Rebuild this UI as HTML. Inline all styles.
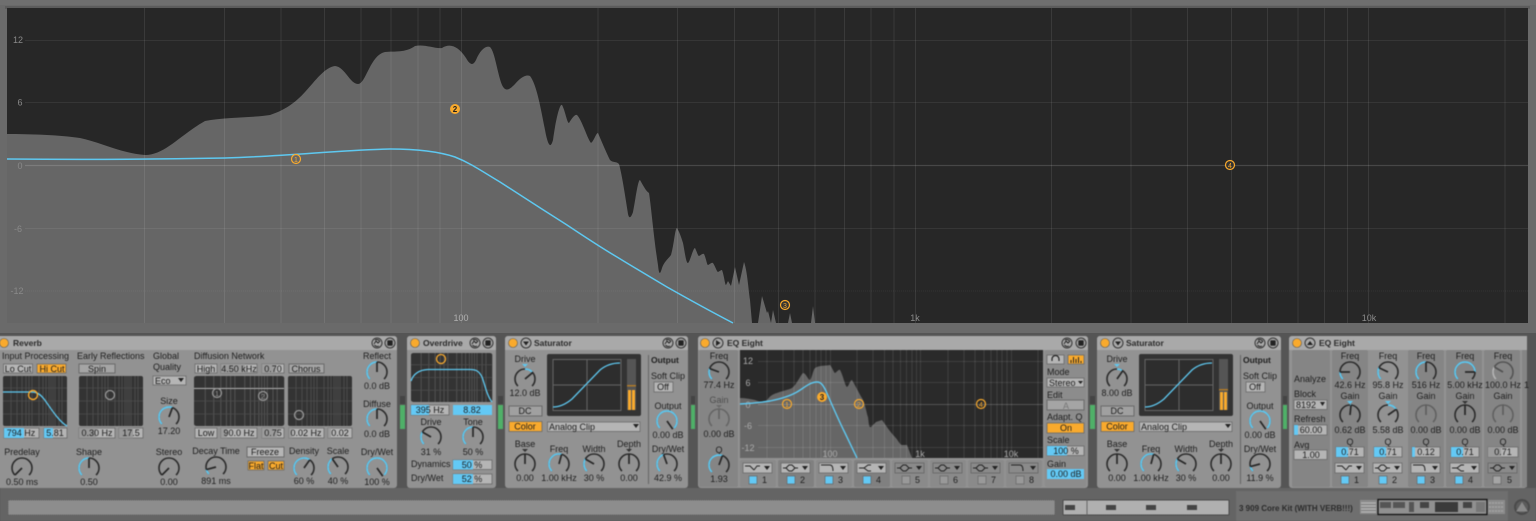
<!DOCTYPE html>
<html><head><meta charset="utf-8"><style>
html,body{margin:0;padding:0;background:#646464;width:1536px;height:521px;overflow:hidden}
svg{display:block;position:absolute;left:0;top:0;font-family:"Liberation Sans",sans-serif}
text{font-size:9px;fill:#1e1e1e;letter-spacing:0}
.c{text-anchor:middle}
.t{font-weight:bold;font-size:8.5px;fill:#2a2a2a}
.g{fill:#8a8a8a;font-size:9px;letter-spacing:0}
.b{fill:none;stroke:#5ec8f0;stroke-width:1.7}
.n{stroke:#262626;stroke-width:1.7}
.box{fill:#b5b5b5;stroke:#6a6a6a;stroke-width:.8}
.bl{fill:#63c9f5}
.or{fill:#f9aa2d;stroke:#6a6a6a;stroke-width:.8}
.tab{fill:#858585}
.pan{fill:#929292}
.ti{fill:#a9a9a9}
.dk{fill:#333}
.act{fill:#f9aa2d;stroke:#555;stroke-width:.6}
.ico{fill:#a9a9a9;stroke:#333;stroke-width:1}
#low{filter:blur(.5px)}
</style></head><body>
<svg width="1536" height="521" viewBox="0 0 1536 521" xmlns="http://www.w3.org/2000/svg">
<defs>
<circle id="k" r="10" pathLength="360" stroke-dasharray="270 999" transform="rotate(135)" fill="none" stroke="#2b2b2b" stroke-width="1.6"/>
<g id="r"><circle r="5" class="ico"/><path d="M-3 1l2-3 2 2 2-2" fill="none" stroke="#222" stroke-width="1"/><path d="M-2-3a3.300 3.300 0 0 1 4.500 1M2 3a3.300 3.300 0 0 1-4.500-1" fill="none" stroke="#222" stroke-width="1"/></g>
<g id="s"><circle r="5" class="ico"/><rect x="-2.700" y="-2.700" width="5.400" height="5.400" rx=".8" fill="#222"/></g>
<g id="mg"><rect width="64" height="50" rx="2" fill="#333"/><path d="M8 0v50M14 0v50M19 0v50M23 0v50M26 0v50M29 0v50M36 0v50M40 0v50M43 0v50M46 0v50M48 0v50M50 0v50M52 0v50M56 0v50M59 0v50" stroke="#555" stroke-width=".7"/><path d="M0 12h64M0 25h64M0 38h64" stroke="#4d4d4d" stroke-width=".7"/></g>
<g id="dn"><circle r="5" class="ico"/><path d="M-3-1.500h6l-3 4z" fill="#222"/></g>
<g id="fs1"><rect x="-15" y="-5" width="29" height="10" class="box"/><path d="M-13-2h5l4 4M-4 2l3-4h3" fill="none" stroke="#222"/><path d="M6-2h6l-3 4z" fill="#222"/></g>
<g id="fs2"><rect x="-15" y="-5" width="29" height="10" class="box"/><path d="M-13 0h3l3-3h3l3 3h3M-10 0l3 3h3l3-3" fill="none" stroke="#222"/><path d="M6-2h6l-3 4z" fill="#222"/></g>
<g id="fs3"><rect x="-15" y="-5" width="29" height="10" class="box"/><path d="M-13-3h9q3 0 3 6" fill="none" stroke="#222"/><path d="M6-2h6l-3 4z" fill="#222"/></g>
<g id="fs4"><rect x="-15" y="-5" width="29" height="10" class="box"/><path d="M-13 0h5l4-3h3M-8 0l4 3h3" fill="none" stroke="#222"/><path d="M6-2h6l-3 4z" fill="#222"/></g>
<g id="fd2"><rect x="-15" y="-5" width="29" height="10" fill="#8a8a8a" stroke="#666" stroke-width=".8"/><path d="M-13 0h3l3-3h3l3 3h3M-10 0l3 3h3l3-3" fill="none" stroke="#222"/><path d="M6-2h6l-3 4z" fill="#222"/></g>
<g id="fd3"><rect x="-15" y="-5" width="29" height="10" fill="#8a8a8a" stroke="#666" stroke-width=".8"/><path d="M-13-3h9q3 0 3 6" fill="none" stroke="#222"/><path d="M6-2h6l-3 4z" fill="#222"/></g>
</defs>

<!-- main analyzer -->
<rect x="0" y="0" width="1536" height="5" fill="#6f6f6f"/>
<rect x="0" y="5" width="1536" height="331" fill="#6a6a6a"/>
<rect x="5" y="6" width="1525" height="3" fill="#5c5c5c"/>
<rect x="7" y="8" width="1521" height="315" fill="#272727"/>
<path fill="#666" d="M7 134C30 134 60 135 80 138C100 142 120 153 145 155C165 155 180 135 205 121C225 117 250 118 270 115C285 110 295 103 305 92C315 81 325 67 335 66C345 67 350 84 358 84C366 84 370 55 385 52C395 51 405 53 415 46C425 44 435 49 442 48C450 43 458 46 466 58C470 65 473 66 476 60C480 50 486 45 490 47C495 52 497 72 502 85C506 93 510 89 515 84C520 78 526 74 530 76C537 85 541 110 546 135C549 148 551 147 553 140C556 118 560 103 562 105C565 110 567 123 569 123C572 118 575 114 577 115C582 120 587 138 591 143C594 141 596 133 598 133C601 140 606 152 610 160C613 163 616 161 619 164C622 175 625 195 628 214C629 219 631 218 633 212C636 196 638 180 640 180C644 187 646 191 649 193C651 205 654 240 658 265C659 275 660 275 662 268C664 262 668 259 671 255C674 245 675 228 677 228C680 233 682 240 683 243C685 253 686 263 688 263C690 262 693 248 695 248C697 252 698 256 699 256C701 255 703 253 704 254C706 258 707 265 708 265C710 264 712 262 713 263C715 266 717 272 718 272C720 271 721 270 722 270C724 275 725 285 726 285L728 281L731 286L735 267L739 285L744 262C747 270 748 285 750 300L752 323L758 323L762 296L767 313L768 311L771 323L773 310L776 323L788 323L790 313L792 323L811 323L813 306L815 323L7 323Z"/>
<path fill="none" stroke="#fff" stroke-opacity=".09" d="M144.500 8v315M224.500 8v315M281 8v315M324.500 8v315M361 8v315M391 8v315M418 8v315M440 8v315M461.500 8v315M598 8v315M677.500 8v315M734.500 8v315M778.500 8v315M815 8v315M844.500 8v315M871 8v315M894 8v315M915.500 8v315M1051.500 8v315M1131 8v315M1187.500 8v315M1231.500 8v315M1267.500 8v315M1298 8v315M1324.500 8v315M1347.500 8v315M1368.500 8v315M1505 8v315"/>
<path fill="none" stroke="#fff" stroke-opacity=".07" d="M25 40.500H1528M25 102.500H1528M25 228.500H1528"/>
<path fill="none" stroke="#fff" stroke-opacity=".06" stroke-dasharray="1 1" d="M25 291H1528"/>
<path fill="none" stroke="#fff" stroke-opacity=".15" stroke-width="1.300" d="M25 165.500H1528"/>
<path fill="none" stroke="#5ec8f0" stroke-width="1.500" d="M7 159C60 159.500 145 159.500 225 158C290 156 340 150 390 149C420 149 440 152 455 157C470 163 480 170 500 182C520 195 545 211 567 225C585 237 600 247 617 257C635 268 650 277 667 287C690 300 710 311 733 323"/>
<text class="g c" x="18" y="43">12</text><text class="g c" x="20" y="105.500">6</text><text class="g c" x="20" y="169">0</text><text class="g c" x="18" y="232">-6</text><text class="g c" x="17" y="294">-12</text>
<text class="g c" x="461" y="321" style="fill:#b0b0b0">100</text><text class="g c" x="915" y="321">1k</text><text class="g c" x="1369" y="321">10k</text>
<circle cx="296" cy="159" r="4.500" fill="none" stroke="#f9aa2d" stroke-width="1.200"/><text class="c" x="296" y="162" style="font-size:7px;fill:#f9aa2d">1</text>
<circle cx="455" cy="109" r="5" fill="#f9aa2d"/><text class="c" x="455" y="112" style="font-size:8px;font-weight:bold">2</text>
<circle cx="785" cy="305" r="4.500" fill="#333" stroke="#f9aa2d" stroke-width="1.200"/><text class="c" x="785" y="308" style="font-size:7px;fill:#f9aa2d">3</text>
<circle cx="1230" cy="165" r="4.500" fill="#333" stroke="#f9aa2d" stroke-width="1.200"/><text class="c" x="1230" y="168" style="font-size:7px;fill:#f9aa2d">4</text>
<rect x="0" y="333" width="1536" height="188" fill="#555"/>

<g id="low">
<!-- bottom -->
<rect x="0" y="488" width="1536" height="33" fill="#646464"/>
<rect x="8" y="500" width="1047" height="15" rx="1" fill="#8d8d8d" stroke="#5a5a5a" stroke-dasharray="1 1"/>
<rect x="1063" y="500" width="166" height="15" rx="1" fill="#b0b0b0" stroke="#4a4a4a"/>
<path d="M1087 500v15" stroke="#666"/>
<rect x="1065" y="505" width="10" height="5" fill="#444"/><rect x="1106" y="505" width="10" height="5" fill="#444"/><rect x="1146" y="505" width="10" height="5" fill="#444"/><rect x="1187" y="505" width="10" height="5" fill="#444"/>
<rect x="1236" y="491" width="272" height="30" fill="#6f6f6f"/>
<text class="t" x="1239" y="511" style="font-size:8px">3 909 Core Kit (WITH VERB!!!)</text>
<rect x="1360" y="500" width="17" height="14" fill="#8c8c8c"/><path d="M1361 503h15M1361 506h15M1361 509h15M1361 512h15" stroke="#bbb"/>
<rect x="1487" y="500" width="18" height="14" fill="#8c8c8c"/><path d="M1489 503h14M1489 507h14M1489 511h14" stroke="#aaa" stroke-dasharray="2 1"/>
<rect x="1378" y="499.500" width="109" height="15" fill="#909090" stroke="#111" stroke-width="1.300"/>
<rect x="1380" y="502" width="11" height="6" fill="#555"/><rect x="1393" y="502" width="12" height="6" fill="#555"/><rect x="1409" y="502" width="5" height="10" fill="#555"/><rect x="1420" y="502" width="9" height="6" fill="#444"/><rect x="1435" y="502" width="23" height="10" fill="#3a3a3a"/><rect x="1463" y="502" width="9" height="6" fill="#444"/><rect x="1476" y="502" width="9" height="10" fill="#777"/>
<circle cx="1522" cy="507" r="7" fill="#5c5c5c" stroke="#4a4a4a" stroke-width="2"/><path d="M1517 511l5-8 5 8z" fill="#8a8a8a" stroke="#8a8a8a"/>

<!-- meters -->
<g fill="#4fb068"><rect x="400" y="405" width="5" height="24"/><rect x="498" y="405" width="5" height="24"/><rect x="691" y="405" width="4" height="24"/><rect x="1090" y="405" width="5" height="24"/><rect x="1283" y="405" width="4" height="24"/></g>
<g fill="#444"><rect x="400" y="396" width="5" height="8"/><rect x="498" y="396" width="5" height="8"/><rect x="691" y="396" width="4" height="8"/><rect x="1090" y="396" width="5" height="8"/><rect x="1283" y="396" width="4" height="8"/></g>

<!-- REVERB -->
<rect x="-4" y="336" width="401" height="152" rx="3" class="pan"/>
<path d="M-4 350v-11a3 3 0 0 1 3-3h395a3 3 0 0 1 3 3v11z" class="ti"/>
<circle cx="4" cy="343" r="4.500" class="act"/>
<text class="t" x="13" y="346">Reverb</text>
<use href="#r" x="377" y="343"/><use href="#s" x="390" y="343"/>
<text x="2" y="359">Input Processing</text><text x="77" y="359">Early Reflections</text><text x="153" y="359">Global</text><text x="194" y="359">Diffusion Network</text><text class="c" x="377" y="359">Reflect</text>
<text x="153" y="370">Quality</text>
<rect x="3.500" y="364" width="29" height="9" class="box"/><text class="c" x="18" y="372">Lo Cut</text>
<rect x="37" y="364" width="29" height="9" class="or"/><text class="c" x="52" y="372">Hi Cut</text>
<rect x="79" y="364" width="36" height="9" fill="#a5a5a5" stroke="#6a6a6a"/><text class="c" x="97" y="372">Spin</text>
<use href="#mg" x="3" y="376"/><use href="#mg" x="79" y="376"/>
<g transform="translate(194 376) scale(1.410 1)"><use href="#mg"/></g><use href="#mg" x="288" y="376"/>
<path d="M3 392h28c6 0 9 2 13 7s14 22 23 27" fill="none" stroke="#5ec8f0" stroke-width="1.300"/>
<circle cx="33" cy="395" r="4.500" fill="none" stroke="#f9aa2d" stroke-width="1.400"/>
<circle cx="110" cy="395" r="4.500" fill="none" stroke="#999" stroke-width="1.300"/>
<path d="M194 388.500h90" stroke="#aaa"/>
<circle cx="217" cy="393" r="4.500" fill="none" stroke="#999" stroke-width="1.200"/><text class="c" x="217" y="396" style="font-size:7px;fill:#999">1</text>
<circle cx="263" cy="396" r="4.500" fill="none" stroke="#999" stroke-width="1.200"/><text class="c" x="263" y="399" style="font-size:7px;fill:#999">2</text>
<circle cx="299" cy="415" r="4.500" fill="none" stroke="#999" stroke-width="1.300"/>
<rect x="4" y="428" width="35" height="10" class="box"/><rect x="4" y="428" width="20" height="10" class="bl"/><text class="c" x="21" y="436">794 Hz</text>
<rect x="44" y="428" width="23" height="10" class="box"/><rect x="44" y="428" width="9" height="10" class="bl"/><text class="c" x="55" y="436">5.81</text>
<rect x="79" y="428" width="36" height="10" class="box"/><rect x="79" y="428" width="17" height="10" fill="#999"/><text class="c" x="97" y="436">0.30 Hz</text>
<rect x="119" y="428" width="24" height="10" class="box"/><rect x="119" y="428" width="14" height="10" fill="#999"/><text class="c" x="131" y="436">17.5</text>
<rect x="153" y="376" width="33" height="9" class="box"/><text x="155" y="384">Eco</text><path d="M178 378h6l-3 4z" fill="#222"/>
<text class="c" x="169" y="404">Size</text><text class="c" x="169" y="434">17.20</text>
<rect x="195" y="364" width="22" height="9" class="box"/><text class="c" x="206" y="372">High</text>
<rect x="221" y="364" width="36" height="9" class="box"/><rect x="221" y="364" width="24" height="9" fill="#9c9c9c"/><text class="c" x="239" y="372">4.50 kHz</text>
<rect x="262" y="364" width="22" height="9" class="box"/><rect x="262" y="364" width="14" height="9" fill="#9c9c9c"/><text class="c" x="273" y="372">0.70</text>
<rect x="289" y="364" width="35" height="9" fill="#a5a5a5" stroke="#6a6a6a"/><text class="c" x="306" y="372">Chorus</text>
<rect x="195" y="428" width="22" height="10" class="box"/><text class="c" x="206" y="436">Low</text>
<rect x="221" y="428" width="36" height="10" class="box"/><rect x="221" y="428" width="6" height="10" fill="#9c9c9c"/><text class="c" x="239" y="436">90.0 Hz</text>
<rect x="262" y="428" width="22" height="10" class="box"/><rect x="262" y="428" width="15" height="10" fill="#9c9c9c"/><text class="c" x="273" y="436">0.75</text>
<rect x="289" y="428" width="35" height="10" class="box"/><rect x="289" y="428" width="3" height="10" fill="#9c9c9c"/><text class="c" x="306" y="436">0.02 Hz</text>
<rect x="328" y="428" width="24" height="10" class="box"/><rect x="328" y="428" width="3" height="10" fill="#9c9c9c"/><text class="c" x="340" y="436">0.02</text>
<text class="c" x="377" y="389">0.0 dB</text><text class="c" x="377" y="407">Diffuse</text><text class="c" x="377" y="437">0.0 dB</text>
<text class="c" x="22" y="455">Predelay</text><text class="c" x="89" y="455">Shape</text><text class="c" x="169" y="455">Stereo</text><text class="c" x="216" y="454">Decay Time</text><text class="c" x="304" y="454">Density</text><text class="c" x="338" y="454">Scale</text><text class="c" x="377" y="455">Dry/Wet</text>
<text class="c" x="22" y="485">0.50 ms</text><text class="c" x="89" y="485">0.50</text><text class="c" x="169" y="485">0.00</text><text class="c" x="216" y="484">891 ms</text><text class="c" x="304" y="484">60 %</text><text class="c" x="338" y="484">40 %</text><text class="c" x="377" y="485">100 %</text>
<rect x="247" y="447" width="37" height="10" fill="#b5b5b5" stroke="#6a6a6a"/><text class="c" x="265" y="455">Freeze</text>
<rect x="248" y="461" width="16" height="9" class="or"/><text class="c" x="256" y="469">Flat</text><rect x="268" y="461" width="16" height="9" class="or"/><text class="c" x="276" y="469">Cut</text>
<g transform="translate(377 372)"><use href="#k"/><circle class="b" r="10" pathLength="360" stroke-dasharray="135 999" transform="rotate(135)"/><line class="n" y2="-10"/></g>
<g transform="translate(377 419)"><use href="#k"/><circle class="b" r="10" pathLength="360" stroke-dasharray="135 999" transform="rotate(135)"/><line class="n" y2="-10"/></g>
<g transform="translate(169 417)"><use href="#k"/><circle class="b" r="10" pathLength="360" stroke-dasharray="155 999" transform="rotate(135)"/><line class="n" y2="-10" transform="rotate(20)"/></g>
<g transform="translate(22 468)"><use href="#k"/><line class="n" y2="-10" transform="rotate(-135)"/></g>
<g transform="translate(89 468)"><use href="#k"/><circle class="b" r="10" pathLength="360" stroke-dasharray="135 999" transform="rotate(135)"/><line class="n" y2="-10"/></g>
<g transform="translate(169 468)"><use href="#k"/><line class="n" y2="-10" transform="rotate(-135)"/></g>
<g transform="translate(216 467)"><use href="#k"/><circle class="b" r="10" pathLength="360" stroke-dasharray="30 999" transform="rotate(135)"/><line class="n" y2="-10" transform="rotate(-105)"/></g>
<g transform="translate(304 468)"><use href="#k"/><circle class="b" r="10" pathLength="360" stroke-dasharray="170 999" transform="rotate(135)"/><line class="n" y2="-10" transform="rotate(35)"/></g>
<g transform="translate(338 467)"><use href="#k"/><circle class="b" r="10" pathLength="360" stroke-dasharray="100 999" transform="rotate(135)"/><line class="n" y2="-10" transform="rotate(-35)"/></g>
<g transform="translate(377 468)"><use href="#k"/><circle class="b" r="10" pathLength="360" stroke-dasharray="270 999" transform="rotate(135)"/><line class="n" y2="-10" transform="rotate(145)"/></g>

<!-- OVERDRIVE -->
<rect x="407" y="336" width="89" height="152" rx="3" class="pan"/>
<path d="M407 350v-11a3 3 0 0 1 3-3h83a3 3 0 0 1 3 3v11z" class="ti"/>
<circle cx="415" cy="343" r="4.500" class="act"/><text class="t" x="423" y="346">Overdrive</text>
<use href="#r" x="475" y="343"/><use href="#s" x="488" y="343"/>
<g transform="translate(411 353) scale(1.270 .980)"><use href="#mg"/></g>
<path d="M411 381C413 375 418 370 428 369.500H470C476 369.500 479 371 482 377C485 385 487 396 492 402" fill="none" stroke="#5ec8f0" stroke-width="1.300"/>
<circle cx="441" cy="359" r="4.500" fill="none" stroke="#f9aa2d" stroke-width="1.300"/>
<rect x="411" y="405" width="38" height="10" class="box"/><rect x="411" y="405" width="18" height="10" class="bl"/><text class="c" x="430" y="413">395 Hz</text>
<rect x="453" y="405" width="39" height="10" class="bl"/><text class="c" x="472" y="413">8.82</text>
<text class="c" x="431" y="425">Drive</text><text class="c" x="473" y="425">Tone</text>
<text class="c" x="431" y="455">31 %</text><text class="c" x="473" y="455">50 %</text>
<g transform="translate(431 437)"><use href="#k"/><circle class="b" r="10" pathLength="360" stroke-dasharray="75 999" transform="rotate(135)"/><line class="n" y2="-10" transform="rotate(-60)"/></g>
<g transform="translate(473 437)"><use href="#k"/><circle class="b" r="10" pathLength="360" stroke-dasharray="135 999" transform="rotate(135)"/><line class="n" y2="-10"/></g>
<text x="411" y="467">Dynamics</text><rect x="453" y="460" width="39" height="9.500" class="box"/><rect x="453" y="460" width="20" height="9.500" class="bl"/><text class="c" x="472" y="468">50 %</text>
<text x="411" y="481">Dry/Wet</text><rect x="453" y="474" width="39" height="10" class="box"/><rect x="453" y="474" width="20" height="10" class="bl"/><text class="c" x="472" y="482">52 %</text>

<!-- SATURATOR 1 -->
<rect x="505" y="336" width="183" height="152" rx="3" class="pan"/>
<path d="M505 350v-11a3 3 0 0 1 3-3h177a3 3 0 0 1 3 3v11z" class="ti"/>
<circle cx="513" cy="343" r="4.500" class="act"/><use href="#dn" x="526" y="343"/><text class="t" x="534" y="346">Saturator</text>
<use href="#r" x="668" y="343"/><use href="#s" x="681" y="343"/>
<text class="c" x="525" y="362">Drive</text><path d="M522 364h6l-3 3z" fill="#5ec8f0"/>
<g transform="translate(525 379)"><use href="#k"/><circle class="b" r="10" pathLength="360" stroke-dasharray="45 999" transform="rotate(-90)"/><line class="n" y2="-10" transform="rotate(50)"/></g>
<text class="c" x="525" y="396">12.0 dB</text>
<rect x="509" y="406" width="33" height="10" fill="#a0a0a0" stroke="#6a6a6a"/><text class="c" x="525" y="414">DC</text>
<rect x="509" y="421.500" width="33" height="10" class="or"/><text class="c" x="525" y="429.500">Color</text>
<rect x="547" y="354" width="94" height="62" rx="2" class="dk"/>
<rect x="553" y="359.500" width="68" height="51" fill="#2d2d2d" stroke="#666"/><path d="M587 359v51M553 385h68" stroke="#666"/>
<path d="M553 407C560 407 566 404 572 399L600 370C606 365 612 363 620 363" fill="none" stroke="#5ec8f0" stroke-width="1.300"/>
<rect x="627" y="359" width="9" height="51" fill="#555"/><rect x="628" y="390" width="3" height="20" fill="#f9aa2d"/><rect x="632" y="390" width="3" height="20" fill="#f9aa2d"/><rect x="627" y="385" width="9" height="1.500" fill="#b07a28"/>
<rect x="547.500" y="422" width="92.500" height="9.500" class="box"/><text x="549" y="430">Analog Clip</text><path d="M633 424h6l-3 4z" fill="#222"/>
<path d="M648.500 355v129" stroke="#666"/>
<text x="651" y="363" style="font-weight:bold;font-size:8.500px">Output</text><text class="c" x="668" y="379">Soft Clip</text>
<rect x="654" y="382" width="19" height="10" class="box"/><text class="c" x="663" y="390">Off</text>
<text class="c" x="668" y="409">Output</text><text class="c" x="668" y="438">0.00 dB</text><text class="c" x="668" y="452">Dry/Wet</text><text class="c" x="668" y="481">42.9 %</text>
<g transform="translate(667 421)"><use href="#k"/><circle class="b" r="10" pathLength="360" stroke-dasharray="270 999" transform="rotate(135)"/><line class="n" y2="-10" transform="rotate(145)"/></g>
<g transform="translate(667 464)"><use href="#k"/><circle class="b" r="10" pathLength="360" stroke-dasharray="115 999" transform="rotate(135)"/><line class="n" y2="-10" transform="rotate(-20)"/></g>
<text class="c" x="525" y="447">Base</text><text class="c" x="559" y="452">Freq</text><text class="c" x="594" y="452">Width</text><text class="c" x="629" y="447">Depth</text>
<path d="M522 449h6l-3 3zM626 449h6l-3 3z" fill="#333"/>
<g transform="translate(525 464)"><use href="#k"/><line class="n" y2="-10"/></g>
<g transform="translate(559 464)"><use href="#k"/><circle class="b" r="10" pathLength="360" stroke-dasharray="150 999" transform="rotate(135)"/><line class="n" y2="-10" transform="rotate(15)"/></g>
<g transform="translate(594 464)"><use href="#k"/><circle class="b" r="10" pathLength="360" stroke-dasharray="75 999" transform="rotate(135)"/><line class="n" y2="-10" transform="rotate(-60)"/></g>
<g transform="translate(629 464)"><use href="#k"/><line class="n" y2="-10"/></g>
<text class="c" x="525" y="481">0.00</text><text class="c" x="559" y="481">1.00 kHz</text><text class="c" x="594" y="481">30 %</text><text class="c" x="629" y="481">0.00</text>

<!-- EQ EIGHT 1 -->
<rect x="698" y="336" width="390" height="152" rx="3" class="pan"/>
<path d="M698 350v-11a3 3 0 0 1 3-3h384a3 3 0 0 1 3 3v11z" class="ti"/>
<circle cx="705" cy="343" r="4.500" class="act"/><circle cx="718" cy="343" r="5" class="ico"/><path d="M716 340l4.500 3-4.500 3z" fill="#222"/><text class="t" x="727" y="346">EQ Eight</text>
<use href="#r" x="1067" y="343"/><use href="#s" x="1081" y="343"/>
<rect x="699" y="350" width="39" height="137" rx="2" class="tab"/>
<text class="c" x="719" y="359">Freq</text><text class="c" x="719" y="388">77.4 Hz</text><text class="c" x="719" y="403" opacity=".55">Gain</text><text class="c" x="719" y="437">0.00 dB</text><text class="c" x="719" y="453">Q</text><text class="c" x="719" y="482">1.93</text>
<g transform="translate(719 372)"><use href="#k"/><circle class="b" r="10" pathLength="360" stroke-dasharray="65 999" transform="rotate(135)"/><line class="n" y2="-10" transform="rotate(-70)"/></g>
<g transform="translate(719 419)" opacity=".35"><use href="#k"/><line class="n" y2="-10"/></g>
<path d="M716 405h6l-3 3z" fill="#6a6a6a"/>
<g transform="translate(719 465)"><use href="#k"/><circle class="b" r="10" pathLength="360" stroke-dasharray="155 999" transform="rotate(135)"/><line class="n" y2="-10" transform="rotate(20)"/></g>
<rect x="740" y="350" width="303" height="108" fill="#2a2a2a"/>
<path fill="#666" d="M740 398C745 398 750 399 755 400C760 402 764 403 767 400C770 396 773 394 777 393C782 391 788 390 792 388C797 384 800 376 803 373C806 373 808 380 810 380C812 378 813 370 815 368C820 365 826 366 830 365C832 367 834 373 835 373C837 372 839 369 840 370C843 375 845 386 847 387C849 386 850 380 852 380C855 385 860 395 862 398C865 403 867 415 868 417C869 425 869 428 871 427L876 422L882 420C885 424 890 432 895 437C898 440 900 445 902 445L907 445L912 458L740 458Z"/>
<path fill="none" stroke="#fff" stroke-opacity=".1" d="M767 350v108M783 350v108M794 350v108M803 350v108M810 350v108M816 350v108M821 350v108M826 350v108M830.500 350v108M857 350v108M873 350v108M884.500 350v108M893 350v108M900.500 350v108M906.500 350v108M912 350v108M916.500 350v108M920.500 350v108M948 350v108M964 350v108M975 350v108M984 350v108M991 350v108M997 350v108M1002 350v108M1007 350v108M1011.500 350v108M1038 350v108"/>
<path fill="none" stroke="#fff" stroke-opacity=".1" d="M758 361.500H1043M758 382.500H1043M758 425.500H1043M758 447.500H1043"/>
<path fill="none" stroke="#fff" stroke-opacity=".2" d="M758 404.500H1043"/>
<g><text class="g c" x="748" y="364" style="fill:#aaa">12</text><text class="g c" x="748" y="386" style="fill:#aaa">6</text><text class="g c" x="748" y="408" style="fill:#aaa">0</text><text class="g c" x="748" y="429" style="fill:#aaa">-6</text><text class="g c" x="748" y="451" style="fill:#aaa">-12</text><text class="g c" x="830" y="457" style="fill:#aaa">100</text><text class="g c" x="920" y="457" style="fill:#aaa">1k</text><text class="g c" x="1011" y="457" style="fill:#aaa">10k</text></g>
<path d="M740 404C750 403.500 760 402.500 770 401C780 399 790 396 797 392C804 388 810 382 817 382C821 382 823 385 826 391C832 405 838 419 845 433L857 458" fill="none" stroke="#5ec8f0" stroke-width="1.400"/>
<circle cx="787" cy="404" r="4.500" fill="none" stroke="#f9aa2d" stroke-width="1.200"/><text class="c" x="787" y="407" style="font-size:7px;fill:#f9aa2d">1</text>
<circle cx="822" cy="397" r="5" fill="#f9aa2d"/><text class="c" x="822" y="400" style="font-size:8px;font-weight:bold">3</text>
<circle cx="859" cy="404" r="4.500" fill="none" stroke="#f9aa2d" stroke-width="1.200"/><text class="c" x="859" y="407" style="font-size:7px;fill:#f9aa2d">2</text>
<circle cx="981" cy="404" r="4.500" fill="none" stroke="#f9aa2d" stroke-width="1.200"/><text class="c" x="981" y="407" style="font-size:7px;fill:#f9aa2d">4</text>
<g><rect x="740" y="460" width="36" height="27" rx="2" fill="#8a8a8a"/><rect x="778" y="460" width="36" height="27" rx="2" fill="#808080"/><rect x="816" y="460" width="36" height="27" rx="2" fill="#8a8a8a"/><rect x="854" y="460" width="36" height="27" rx="2" fill="#808080"/><rect x="892" y="460" width="36" height="27" rx="2" fill="#8a8a8a"/><rect x="930" y="460" width="36" height="27" rx="2" fill="#8a8a8a"/><rect x="968" y="460" width="36" height="27" rx="2" fill="#8a8a8a"/><rect x="1006" y="460" width="36" height="27" rx="2" fill="#8a8a8a"/></g>
<use href="#fs1" x="758" y="468"/><use href="#fs2" x="796" y="468"/><use href="#fs3" x="834" y="468"/><use href="#fs4" x="872" y="468"/><use href="#fd2" x="910" y="468"/><use href="#fd2" x="948" y="468"/><use href="#fd2" x="986" y="468"/><use href="#fd3" x="1024" y="468"/>
<rect x="749" y="476" width="8" height="8" class="bl" stroke="#666" stroke-width=".7"/><rect x="787" y="476" width="8" height="8" class="bl" stroke="#666" stroke-width=".7"/><rect x="825" y="476" width="8" height="8" class="bl" stroke="#666" stroke-width=".7"/><rect x="863" y="476" width="8" height="8" class="bl" stroke="#666" stroke-width=".7"/>
<rect x="902" y="476" width="8" height="8" fill="#999" stroke="#666" stroke-width=".7"/><rect x="940" y="476" width="8" height="8" fill="#999" stroke="#666" stroke-width=".7"/><rect x="978" y="476" width="8" height="8" fill="#999" stroke="#666" stroke-width=".7"/><rect x="1016" y="476" width="8" height="8" fill="#999" stroke="#666" stroke-width=".7"/>
<text x="762" y="483">1</text><text x="800" y="483">2</text><text x="838" y="483">3</text><text x="876" y="483">4</text><text x="915" y="483">5</text><text x="953" y="483">6</text><text x="991" y="483">7</text><text x="1029" y="483">8</text>
<rect x="1045" y="350" width="41" height="137" fill="#8c8c8c" rx="2"/>
<rect x="1047" y="355" width="17" height="9" class="box"/><path d="M1052 361v-2a3.500 3.500 0 0 1 7 0v2" fill="none" stroke="#222" stroke-width="1.200"/>
<rect x="1068" y="355" width="16" height="9" class="or"/><path d="M1071 363v-3M1073.500 363v-6M1076 363v-4M1078.500 363v-6M1081 363v-2" stroke="#222"/>
<text x="1047" y="375">Mode</text><rect x="1047" y="378" width="37" height="9" class="box"/><text x="1049" y="386">Stereo</text><path d="M1078 381h5l-2.500 3z" fill="#222"/>
<text x="1047" y="398">Edit</text><rect x="1047" y="400" width="37" height="10" fill="#a5a5a5" stroke="#6a6a6a"/><text class="c" x="1066" y="409" style="fill:#777">A</text>
<text x="1047" y="420">Adapt. Q</text><rect x="1047" y="423" width="37" height="10" class="or"/><text class="c" x="1066" y="431">On</text>
<text x="1047" y="443">Scale</text><rect x="1047" y="446" width="37" height="9.500" class="box"/><rect x="1047" y="446" width="20" height="9.500" class="bl"/><text class="c" x="1066" y="454">100 %</text>
<text x="1047" y="467">Gain</text><rect x="1047" y="469" width="37" height="10" class="bl"/><text class="c" x="1066" y="477">0.00 dB</text>

<!-- SATURATOR 2 -->
<rect x="1097" y="336" width="184" height="152" rx="3" class="pan"/>
<path d="M1097 350v-11a3 3 0 0 1 3-3h178a3 3 0 0 1 3 3v11z" class="ti"/>
<circle cx="1105" cy="343" r="4.500" class="act"/><use href="#dn" x="1118" y="343"/><text class="t" x="1126" y="346">Saturator</text>
<use href="#r" x="1260" y="343"/><use href="#s" x="1273" y="343"/>
<text class="c" x="1117" y="362">Drive</text><path d="M1114 364h6l-3 3z" fill="#5ec8f0"/>
<g transform="translate(1117 379)"><use href="#k"/><circle class="b" r="10" pathLength="360" stroke-dasharray="30 999" transform="rotate(-90)"/><line class="n" y2="-10" transform="rotate(35)"/></g>
<text class="c" x="1117" y="396">8.00 dB</text>
<rect x="1101" y="406" width="33" height="10" fill="#a0a0a0" stroke="#6a6a6a"/><text class="c" x="1117" y="414">DC</text>
<rect x="1101" y="421.500" width="33" height="10" class="or"/><text class="c" x="1117" y="429.500">Color</text>
<rect x="1139" y="354" width="94" height="62" rx="2" class="dk"/>
<rect x="1145" y="359.500" width="68" height="51" fill="#2d2d2d" stroke="#666"/><path d="M1179 359v51M1145 385h68" stroke="#666"/>
<path d="M1145 407C1152 407 1158 404 1164 399L1192 370C1198 365 1204 363 1212 363" fill="none" stroke="#5ec8f0" stroke-width="1.300"/>
<rect x="1219" y="359" width="9" height="51" fill="#555"/><rect x="1220" y="392" width="3" height="18" fill="#f9aa2d"/><rect x="1224" y="392" width="3" height="18" fill="#f9aa2d"/><rect x="1219" y="389" width="9" height="1.500" fill="#b07a28"/>
<rect x="1139.500" y="422" width="92.500" height="9.500" class="box"/><text x="1141" y="430">Analog Clip</text><path d="M1225 424h6l-3 4z" fill="#222"/>
<path d="M1240.500 355v129" stroke="#666"/>
<text x="1243" y="363" style="font-weight:bold;font-size:8.500px">Output</text><text class="c" x="1260" y="379">Soft Clip</text>
<rect x="1246" y="382" width="19" height="10" class="box"/><text class="c" x="1255" y="390">Off</text>
<text class="c" x="1260" y="409">Output</text><text class="c" x="1260" y="438">0.00 dB</text><text class="c" x="1260" y="452">Dry/Wet</text><text class="c" x="1260" y="481">11.9 %</text>
<g transform="translate(1260 421)"><use href="#k"/><circle class="b" r="10" pathLength="360" stroke-dasharray="270 999" transform="rotate(135)"/><line class="n" y2="-10" transform="rotate(145)"/></g>
<g transform="translate(1260 464)"><use href="#k"/><circle class="b" r="10" pathLength="360" stroke-dasharray="30 999" transform="rotate(135)"/><line class="n" y2="-10" transform="rotate(-105)"/></g>
<text class="c" x="1117" y="447">Base</text><text class="c" x="1151" y="452">Freq</text><text class="c" x="1186" y="452">Width</text><text class="c" x="1221" y="447">Depth</text>
<path d="M1114 449h6l-3 3zM1218 449h6l-3 3z" fill="#333"/>
<g transform="translate(1117 464)"><use href="#k"/><line class="n" y2="-10"/></g>
<g transform="translate(1151 464)"><use href="#k"/><circle class="b" r="10" pathLength="360" stroke-dasharray="150 999" transform="rotate(135)"/><line class="n" y2="-10" transform="rotate(15)"/></g>
<g transform="translate(1186 464)"><use href="#k"/><circle class="b" r="10" pathLength="360" stroke-dasharray="75 999" transform="rotate(135)"/><line class="n" y2="-10" transform="rotate(-60)"/></g>
<g transform="translate(1221 464)"><use href="#k"/><line class="n" y2="-10"/></g>
<text class="c" x="1117" y="481">0.00</text><text class="c" x="1151" y="481">1.00 kHz</text><text class="c" x="1186" y="481">30 %</text><text class="c" x="1221" y="481">0.00</text>

<!-- EQ EIGHT 2 -->
<rect x="1289" y="336" width="238" height="152" rx="3" class="pan"/>
<path d="M1289 350v-11a3 3 0 0 1 3-3h235v14z" class="ti"/>
<circle cx="1297" cy="343" r="4.500" class="act"/><circle cx="1310" cy="343" r="5" class="ico"/><path d="M1307 345h6l-3-4z" fill="#222"/><text class="t" x="1319" y="346">EQ Eight</text>
<rect x="1292" y="350" width="38" height="137" rx="2" class="tab"/><rect x="1332" y="350" width="36" height="137" rx="2" class="tab"/><rect x="1408" y="350" width="36" height="137" rx="2" class="tab"/><rect x="1446" y="350" width="36" height="137" rx="2" class="tab"/><rect x="1484" y="350" width="36" height="137" rx="2" class="tab"/><rect x="1522" y="350" width="5" height="137" class="tab"/>
<text x="1294" y="382">Analyze</text><text x="1294" y="397">Block</text><rect x="1294" y="400" width="33" height="9.500" class="box"/><text x="1296" y="408">8192</text><path d="M1320 402h5l-2.500 4z" fill="#222"/>
<text x="1294" y="422">Refresh</text><rect x="1294" y="425" width="33" height="10" class="box"/><rect x="1294" y="425" width="4" height="10" class="bl"/><text class="c" x="1311" y="433">60.00</text>
<text x="1294" y="448">Avg</text><rect x="1294" y="450" width="33" height="9.500" class="box"/><text class="c" x="1311" y="458">1.00</text>
<text class="c" x="1350" y="359">Freq</text><text class="c" x="1388" y="359">Freq</text><text class="c" x="1426" y="359">Freq</text><text class="c" x="1465" y="359">Freq</text><text class="c" x="1503" y="359">Freq</text>
<text class="c" x="1350" y="388">42.6 Hz</text><text class="c" x="1388" y="388">95.8 Hz</text><text class="c" x="1426" y="388">516 Hz</text><text class="c" x="1465" y="388">5.00 kHz</text><text class="c" x="1503" y="388">100.0 Hz</text>
<text class="c" x="1350" y="399">Gain</text><text class="c" x="1388" y="399">Gain</text><text class="c" x="1426" y="399">Gain</text><text class="c" x="1465" y="399">Gain</text><text class="c" x="1503" y="399">Gain</text>
<text class="c" x="1350" y="433">0.62 dB</text><text class="c" x="1388" y="433">5.58 dB</text><text class="c" x="1426" y="433">0.00 dB</text><text class="c" x="1465" y="433">0.00 dB</text><text class="c" x="1503" y="433">0.00 dB</text>
<text class="c" x="1350" y="445">Q</text><text class="c" x="1388" y="445">Q</text><text class="c" x="1426" y="445">Q</text><text class="c" x="1465" y="445">Q</text><text class="c" x="1503" y="445">Q</text>
<g transform="translate(1350 372)"><use href="#k"/><circle class="b" r="10" pathLength="360" stroke-dasharray="45 999" transform="rotate(135)"/><line class="n" y2="-10" transform="rotate(-90)"/></g>
<g transform="translate(1388 372)"><use href="#k"/><circle class="b" r="10" pathLength="360" stroke-dasharray="70 999" transform="rotate(135)"/><line class="n" y2="-10" transform="rotate(-65)"/></g>
<g transform="translate(1426 372)"><use href="#k"/><circle class="b" r="10" pathLength="360" stroke-dasharray="135 999" transform="rotate(135)"/><line class="n" y2="-10"/></g>
<g transform="translate(1465 372)"><use href="#k"/><circle class="b" r="10" pathLength="360" stroke-dasharray="225 999" transform="rotate(135)"/><line class="n" y2="-10" transform="rotate(90)"/></g>
<g transform="translate(1503 372)" opacity=".55"><use href="#k"/><circle r="10" fill="none" stroke="#ddd" stroke-width="1.700" pathLength="360" stroke-dasharray="75 999" transform="rotate(135)"/><line class="n" y2="-10" transform="rotate(-60)"/></g>
<path d="M1347 401h6l-3 3zM1385 401h6l-3 3z" fill="#5ec8f0"/><path d="M1462 401h6l-3 3z" fill="#333"/>
<g transform="translate(1350 415)"><use href="#k"/><circle class="b" r="10" pathLength="360" stroke-dasharray="6 999" transform="rotate(-90)"/><line class="n" y2="-10" transform="rotate(6)"/></g>
<g transform="translate(1388 415)"><use href="#k"/><circle class="b" r="10" pathLength="360" stroke-dasharray="55 999" transform="rotate(-90)"/><line class="n" y2="-10" transform="rotate(55)"/></g>
<g transform="translate(1426 415)" opacity=".4"><use href="#k"/><line class="n" y2="-10"/></g>
<g transform="translate(1465 415)"><use href="#k"/><line class="n" y2="-10"/></g>
<g transform="translate(1503 415)" opacity=".4"><use href="#k"/><line class="n" y2="-10"/></g>
<rect x="1336" y="447" width="28" height="10" class="box"/><rect x="1336" y="447" width="12" height="10" class="bl"/><text class="c" x="1350" y="455">0.71</text>
<rect x="1374" y="447" width="28" height="10" class="box"/><rect x="1374" y="447" width="12" height="10" class="bl"/><text class="c" x="1388" y="455">0.71</text>
<rect x="1412" y="447" width="28" height="10" class="box"/><rect x="1412" y="447" width="3" height="10" class="bl"/><text class="c" x="1426" y="455">0.12</text>
<rect x="1451" y="447" width="28" height="10" class="box"/><rect x="1451" y="447" width="12" height="10" class="bl"/><text class="c" x="1465" y="455">0.71</text>
<rect x="1488" y="447" width="30" height="10" class="box"/><rect x="1488" y="447" width="13" height="10" fill="#9c9c9c"/><text class="c" x="1503" y="455">0.71</text>
<use href="#fs1" x="1350" y="468"/><use href="#fs2" x="1388" y="468"/><use href="#fs3" x="1426" y="468"/><use href="#fs4" x="1465" y="468"/><use href="#fd2" x="1503" y="468"/>
<rect x="1341" y="476" width="8" height="8" class="bl" stroke="#666" stroke-width=".7"/><rect x="1379" y="476" width="8" height="8" class="bl" stroke="#666" stroke-width=".7"/><rect x="1417" y="476" width="8" height="8" class="bl" stroke="#666" stroke-width=".7"/><rect x="1455" y="476" width="8" height="8" class="bl" stroke="#666" stroke-width=".7"/><rect x="1493" y="476" width="8" height="8" fill="#a5a5a5" stroke="#666" stroke-width=".7"/>
<text x="1354" y="483">1</text><text x="1392" y="483">2</text><text x="1430" y="483">3</text><text x="1468" y="483">4</text><text x="1507" y="483">5</text>
<text x="1524" y="388">1</text>
</g>
</svg>
</body></html>
